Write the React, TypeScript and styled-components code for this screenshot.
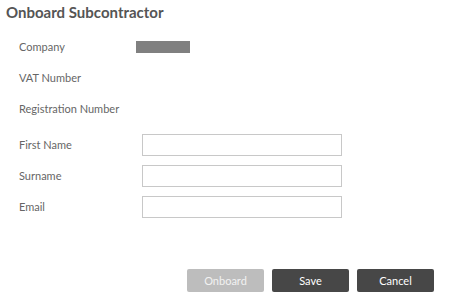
import React from 'react';
import styled, { createGlobalStyle } from 'styled-components';

const GlobalStyle = createGlobalStyle`
  html, body {
    margin: 0;
    padding: 0;
    background: #ffffff;
    font-family: Lato, "Open Sans", sans-serif;
  }
`;

const Page = styled.div`
  width: 459px;
  height: 300px;
  display: flex;
  flex-direction: column;
  box-sizing: border-box;
  padding: 3px 0 0 6px;
`;

const Title = styled.h1`
  margin: 0;
  font-size: 15px;
  font-weight: 700;
  color: #555555;
  line-height: 18px;
`;

const Form = styled.div`
  display: grid;
  grid-template-columns: 117px 200px;
  grid-template-rows: repeat(3, 31px) 5px repeat(3, 31px);
  align-items: center;
  padding: 10px 0 0 13px;
`;

const Label = styled.div`
  font-size: 11px;
  color: #666666;
`;

const Masked = styled.div`
  width: 54px;
  height: 12px;
  background: #808080;
`;

const Gap = styled.div`
  grid-column: 1 / -1;
`;

const Input = styled.input`
  box-sizing: border-box;
  width: 200px;
  height: 22px;
  margin-left: 6px;
  border: 1px solid #c8c8c8;
  border-radius: 0;
  background: #ffffff;
  outline: none;
`;

const Actions = styled.div`
  display: flex;
  justify-content: flex-end;
  gap: 8px;
  margin-top: auto;
  padding: 0 25px 8px 0;
`;

const Button = styled.button<{ $disabled?: boolean }>`
  width: 77px;
  height: 23px;
  border: none;
  border-radius: 2px;
  font-family: Lato, "Open Sans", sans-serif;
  font-size: 11px;
  color: ${(p) => (p.$disabled ? '#f2f2f2' : '#ffffff')};
  background: ${(p) => (p.$disabled ? '#bdbdbd' : '#474747')};
  cursor: ${(p) => (p.$disabled ? 'default' : 'pointer')};
`;

const fields = ['First Name', 'Surname', 'Email'];

export default function App() {
  return (
    <>
      <GlobalStyle />
      <Page>
        <Title>Onboard Subcontractor</Title>
        <Form>
          <Label>Company</Label>
          <Masked />
          <Label>VAT Number</Label>
          <div />
          <Label>Registration Number</Label>
          <div />
          <Gap />
          {fields.map((f) => (
            <React.Fragment key={f}>
              <Label>{f}</Label>
              <Input type="text" />
            </React.Fragment>
          ))}
        </Form>
        <Actions>
          <Button $disabled>Onboard</Button>
          <Button>Save</Button>
          <Button>Cancel</Button>
        </Actions>
      </Page>
    </>
  );
}
